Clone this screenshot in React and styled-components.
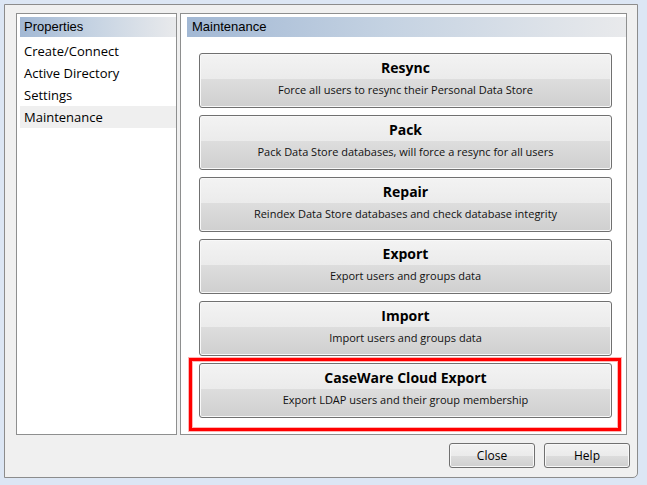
import React from 'react';
import styled, { createGlobalStyle } from 'styled-components';

const GlobalStyle = createGlobalStyle`
  html, body {
    margin: 0;
    padding: 0;
    background: #dce6f4;
  }
  * {
    box-sizing: border-box;
  }
`;

const sans = `"Open Sans", "Noto Sans", sans-serif`;
const classic = `"Liberation Sans", Arial, sans-serif`;

const Dialog = styled.div`
  margin: 4px 0 0 4px;
  width: 634px;
  height: 474px;
  border: 1px solid #8c8c8c;
  border-bottom-right-radius: 5px;
  background: #f0f0f0;
  padding: 8px 7px 9px 11px;
  display: flex;
  flex-direction: column;
`;

const Panes = styled.div`
  flex: 1;
  display: flex;
  gap: 3px;
  margin-right: 3px;
  min-height: 0;
`;

const Pane = styled.div`
  background: #fff;
  border: 1px solid #8e8f8f;
  display: flex;
  flex-direction: column;
  width: ${(p) => p.$width}px;
  padding: ${(p) => p.$padding};
`;

const PaneHeader = styled.div`
  height: 20px;
  line-height: 20px;
  padding-left: ${(p) => p.$indent}px;
  font-family: ${classic};
  font-size: 13px;
  color: #000;
  background: linear-gradient(to right, #a2b8d4 0%, #c4d2e2 45%, #e9eaec 100%);
`;

const NavList = styled.div`
  margin-top: 3px;
  display: flex;
  flex-direction: column;
`;

const NavItem = styled.div`
  height: 22px;
  line-height: 22px;
  padding-left: 4px;
  font-family: ${sans};
  font-size: 13px;
  color: #000;
  background: ${(p) => (p.$active ? '#efefef' : 'transparent')};
`;

const ActionList = styled.div`
  margin: 16px 14px 0 12px;
  display: flex;
  flex-direction: column;
  gap: 7px;
`;

const ActionButton = styled.div`
  height: 55px;
  border: 1px solid #707070;
  border-radius: 3px;
  box-shadow: inset 0 0 0 1px #f8f8f8;
  background: linear-gradient(
    #f3f3f3 0,
    #ebebeb 25px,
    #dddddd 25px,
    #cfcfcf 100%
  );
  text-align: center;
  font-family: ${sans};
  color: #000;
`;

const ActionTitle = styled.div`
  padding-top: 5px;
  height: 23px;
  line-height: 18px;
  font-size: 14px;
  font-weight: 700;
`;

const ActionText = styled.div`
  margin-top: 5px;
  line-height: 16px;
  font-size: 11px;
  color: #111;
`;

const Highlight = styled.div`
  margin: -5px -9px 0 -10px;
  padding: 2px 6px 10px 7px;
  border: 3px solid #ff0000;
  box-shadow: 0 0 0 1px #ffb4b4, inset 0 0 0 1px #ffb4b4;
`;

const Footer = styled.div`
  margin-top: 8px;
  height: 25px;
  display: flex;
  justify-content: flex-end;
  gap: 9px;
`;

const FooterButton = styled.div`
  width: 86px;
  height: 25px;
  line-height: 23px;
  border: 1px solid #707070;
  border-radius: 3px;
  box-shadow: inset 0 0 0 1px #f8f8f8;
  background: linear-gradient(#f2f2f2 0, #ebebeb 50%, #dddddd 50%, #cfcfcf 100%);
  text-align: center;
  font-family: ${sans};
  font-size: 12px;
  color: #000;
`;

const navItems = ['Create/Connect', 'Active Directory', 'Settings', 'Maintenance'];

const actions = [
  { title: 'Resync', text: 'Force all users to resync their Personal Data Store' },
  { title: 'Pack', text: 'Pack Data Store databases, will force a resync for all users' },
  { title: 'Repair', text: 'Reindex Data Store databases and check database integrity' },
  { title: 'Export', text: 'Export users and groups data' },
  { title: 'Import', text: 'Import users and groups data' },
];

const Action = ({ title, text }) => (
  <ActionButton>
    <ActionTitle>{title}</ActionTitle>
    <ActionText>{text}</ActionText>
  </ActionButton>
);

const App = () => (
  <>
    <GlobalStyle />
    <Dialog>
      <Panes>
        <Pane $width={161} $padding="3px 0 3px 3px">
          <PaneHeader $indent={4}>Properties</PaneHeader>
          <NavList>
            {navItems.map((item) => (
              <NavItem key={item} $active={item === 'Maintenance'}>
                {item}
              </NavItem>
            ))}
          </NavList>
        </Pane>
        <Pane $width={447} $padding="3px 0 3px 6px">
          <PaneHeader $indent={5}>Maintenance</PaneHeader>
          <ActionList>
            {actions.map((a) => (
              <Action key={a.title} {...a} />
            ))}
            <Highlight>
              <Action
                title="CaseWare Cloud Export"
                text="Export LDAP users and their group membership"
              />
            </Highlight>
          </ActionList>
        </Pane>
      </Panes>
      <Footer>
        <FooterButton>Close</FooterButton>
        <FooterButton>Help</FooterButton>
      </Footer>
    </Dialog>
  </>
);

export default App;
